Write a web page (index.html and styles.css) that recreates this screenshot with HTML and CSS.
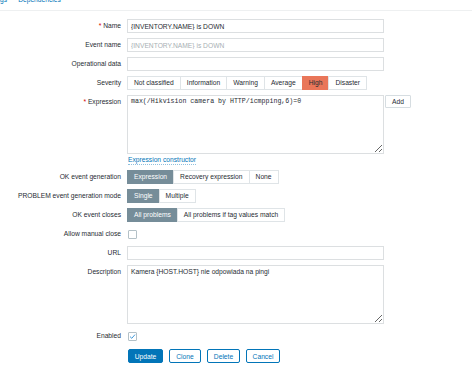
FILE: index.html
```html
<!DOCTYPE html>
<html lang="en">
<head>
    <meta charset="UTF-8">
    <title>Trigger</title>
    <link rel="stylesheet" href="styles.css">
</head>
<body>
    <div class="tabs">
        <span class="tab">Tags</span>
        <span class="tab">Dependencies</span>
    </div>

    <div class="form">
        <label class="label"><span class="req">*</span> Name</label>
        <div class="field"><input type="text" class="text" value="{INVENTORY.NAME} is DOWN"></div>

        <label class="label">Event name</label>
        <div class="field"><input type="text" class="text" placeholder="{INVENTORY.NAME} is DOWN"></div>

        <label class="label">Operational data</label>
        <div class="field"><input type="text" class="text"></div>

        <label class="label">Severity</label>
        <div class="field">
            <div class="radios">
                <span class="radio">Not classified</span>
                <span class="radio">Information</span>
                <span class="radio">Warning</span>
                <span class="radio">Average</span>
                <span class="radio high">High</span>
                <span class="radio">Disaster</span>
            </div>
        </div>

        <label class="label label-top"><span class="req">*</span> Expression</label>
        <div class="field">
            <div class="expr-row">
                <textarea class="area mono">max(/Hikvision camera by HTTP/icmpping,6)=0</textarea>
                <button class="btn-grey">Add</button>
            </div>
            <a class="link">Expression constructor</a>
        </div>

        <label class="label">OK event generation</label>
        <div class="field">
            <div class="radios">
                <span class="radio on">Expression</span>
                <span class="radio">Recovery expression</span>
                <span class="radio">None</span>
            </div>
        </div>

        <label class="label">PROBLEM event generation mode</label>
        <div class="field">
            <div class="radios">
                <span class="radio on">Single</span>
                <span class="radio">Multiple</span>
            </div>
        </div>

        <label class="label">OK event closes</label>
        <div class="field">
            <div class="radios">
                <span class="radio on">All problems</span>
                <span class="radio">All problems if tag values match</span>
            </div>
        </div>

        <label class="label">Allow manual close</label>
        <div class="field"><span class="check"></span></div>

        <label class="label">URL</label>
        <div class="field"><input type="text" class="text"></div>

        <label class="label label-top">Description</label>
        <div class="field"><textarea class="area desc">Kamera {HOST.HOST} nie odpowiada na pingi</textarea></div>

        <label class="label">Enabled</label>
        <div class="field">
            <span class="check">
                <svg width="7" height="7" viewBox="0 0 7 7"><path d="M1 3.6 L2.8 5.3 L6 1.6" fill="none" stroke="#2c8ed6" stroke-width="0.9"/></svg>
            </span>
        </div>

        <div></div>
        <div class="actions">
            <button class="btn-main">Update</button>
            <button class="btn-alt">Clone</button>
            <button class="btn-alt">Delete</button>
            <button class="btn-alt">Cancel</button>
        </div>
    </div>
</body>
</html>
```

FILE: styles.css
```css
html, body {
    margin: 0;
    padding: 0;
    background-color: #fff;
    overflow: hidden;
}
body {
    font-family: 'Liberation Sans', Arial, sans-serif;
    font-size: 6.7px;
    color: #1f2c33;
}
.tabs {
    margin: -5px 2px 0 -7px;
    height: 15px;
    line-height: 10px;
    border-bottom: 1px solid #eef0f1;
    display: flex;
    gap: 11px;
}
.tab {
    color: #0275b8;
}
.form {
    display: grid;
    grid-template-columns: 121px 257px;
    column-gap: 6px;
    row-gap: 5px;
    padding-top: 8px;
}
.label {
    text-align: right;
    line-height: 14px;
    height: 14px;
}
.label-top {
    align-self: start;
}
.req {
    color: #d40000;
}
.field {
    display: flex;
    flex-direction: column;
    align-items: flex-start;
    min-height: 14px;
    justify-content: center;
}
.text {
    box-sizing: border-box;
    width: 257px;
    height: 14px;
    margin: 0;
    padding: 0 3px;
    border: 1px solid #dcdfe1;
    font-family: inherit;
    font-size: 6.7px;
    color: #1f2c33;
    outline: none;
}
.text::placeholder {
    color: #a8b0b4;
}
.radios {
    display: flex;
}
.radio {
    box-sizing: border-box;
    height: 14px;
    line-height: 12px;
    padding: 0 6px;
    border: 1px solid #dfe4e7;
    margin-left: -1px;
    background-color: #fff;
}
.radio:first-child {
    margin-left: 0;
}
.radio.on {
    background-color: #768d99;
    border-color: #768d99;
    color: #fff;
}
.radio.high {
    background-color: #e97659;
    border-color: #e97659;
}
.expr-row {
    display: flex;
    align-items: flex-start;
}
.area {
    box-sizing: border-box;
    width: 257px;
    height: 59px;
    margin: 0;
    padding: 2px 3px;
    border: 1px solid #dcdfe1;
    font-family: inherit;
    font-size: 6.7px;
    color: #1f2c33;
    resize: vertical;
    outline: none;
}
.area.mono {
    font-family: 'Liberation Mono', 'Courier New', monospace;
    font-size: 6.6px;
}
.area.desc {
    height: 59px;
}
.btn-grey {
    box-sizing: border-box;
    margin-left: 1px;
    width: 26px;
    height: 13px;
    padding: 0;
    border: 1px solid #d6dde1;
    border-radius: 1px;
    background-color: #fff;
    color: #1f2c33;
    font-family: inherit;
    font-size: 6.7px;
}
.link {
    color: #0275b8;
    line-height: 11px;
    height: 11px;
    border-bottom: 1px dotted #8fc0de;
    box-sizing: border-box;
    margin-left: 1px;
}
.check {
    box-sizing: border-box;
    width: 9px;
    height: 9px;
    margin: 1px 0 0 1px;
    border: 1px solid #b4c1c7;
    border-radius: 1px;
    display: flex;
    align-items: center;
    justify-content: center;
}
.actions {
    display: flex;
    gap: 6px;
    padding: 1px 0 0 1px;
}
.actions button {
    box-sizing: border-box;
    height: 14px;
    padding: 0;
    border-radius: 2px;
    font-family: inherit;
    font-size: 6.7px;
}
.btn-main {
    width: 35px;
    background-color: #0275b8;
    border: 1px solid #0275b8;
    color: #fff;
}
.btn-alt {
    width: 32px;
    background-color: #fff;
    border: 1px solid #0275b8;
    color: #0275b8;
}
.btn-alt:nth-child(3) {
    width: 33px;
}
.btn-alt:nth-child(4) {
    width: 34px;
}
```
